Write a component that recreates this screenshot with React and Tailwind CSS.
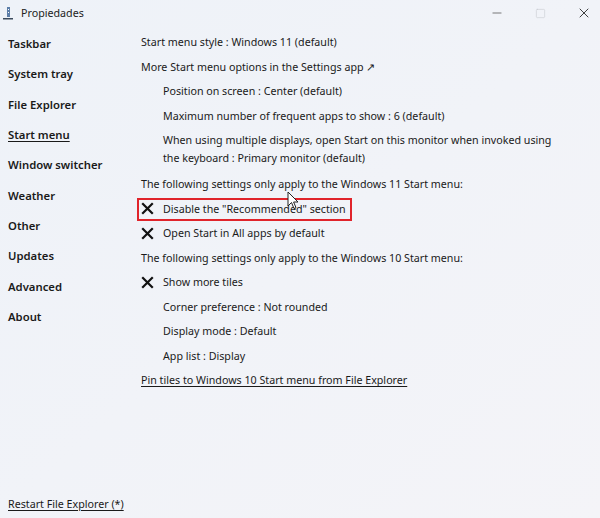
import { Minus, Square, X } from 'lucide-react';

const navItems = ['Taskbar', 'System tray', 'File Explorer', 'Start menu', 'Window switcher', 'Weather', 'Other', 'Updates', 'Advanced', 'About'];

const Cross = () => (
    <svg width="13" height="13" viewBox="0 0 13 13" className="shrink-0">
        <path d="M2 2 L11 11 M11 2 L2 11" stroke="#111" strokeWidth="2.2" strokeLinecap="square" />
    </svg>
);

const Row = ({ children, indent, check, boxed }) => (
    <div className={`relative flex h-[24.5px] items-center ${indent ? 'pl-[22px]' : ''}`}>
        {check && (
            <span className="flex w-[22px] items-center">
                <Cross />
            </span>
        )}
        <span>{children}</span>
        {boxed && <span className="absolute -left-[4px] top-[1px] h-[23px] w-[215px] border-2 border-[#e0242b]" />}
    </div>
);

const App = () => {
    return (
        <div className="relative flex h-[518px] w-[600px] flex-col overflow-hidden bg-gradient-to-br from-[#eef2f8] via-[#f1f3f8] to-[#f4f4f8] font-['Noto_Sans',sans-serif] text-[10.7px] text-[#1a1a1a]">
            {/* title bar */}
            <div className="flex h-[26px] items-center">
                <svg width="10" height="14" viewBox="0 0 10 14" className="ml-[3px]">
                    <rect x="4" y="1" width="3" height="10" fill="#5c7ea8" />
                    <rect x="5" y="3" width="1" height="1" fill="#fff" />
                    <rect x="5" y="6" width="1" height="1" fill="#fff" />
                    <rect x="0" y="12" width="10" height="1.5" fill="#3b4a5c" />
                </svg>
                <span className="ml-[8px] text-[10.7px] text-[#222]">Propiedades</span>
                <div className="ml-auto flex h-full items-center gap-[27.5px] pr-[8px]">
                    <span className="flex w-[16px] justify-center text-[#444]"><Minus size={14} strokeWidth={1.2} /></span>
                    <span className="flex w-[16px] justify-center text-[#c4c8ce]"><Square size={11} strokeWidth={1.2} /></span>
                    <span className="flex w-[16px] justify-center text-[#222]"><X size={16} strokeWidth={1.3} /></span>
                </div>
            </div>

            <div className="flex flex-1">
                {/* sidebar */}
                <nav className="flex w-[141px] flex-col pl-[8px] pt-[3px]">
                    {navItems.map((item) => (
                        <div key={item} className="flex h-[30.4px] items-center text-[11.3px] font-semibold text-[#1a1a1a]">
                            <span className={item === 'Start menu' ? 'underline underline-offset-2' : ''}>{item}</span>
                        </div>
                    ))}
                </nav>

                {/* settings list */}
                <main className="flex flex-col pt-[4px]">
                    <Row>Start menu style : Windows 11 (default)</Row>
                    <Row>More Start menu options in the Settings app ↗</Row>
                    <Row indent>Position on screen : Center (default)</Row>
                    <Row indent>Maximum number of frequent apps to show : 6 (default)</Row>
                    <div className="pl-[22px] pt-[3px] leading-[18px]">
                        <div>When using multiple displays, open Start on this monitor when invoked using</div>
                        <div>the keyboard : Primary monitor (default)</div>
                    </div>
                    <div className="h-[5px]" />
                    <Row>The following settings only apply to the Windows 11 Start menu:</Row>
                    <Row check boxed>Disable the "Recommended" section</Row>
                    <Row check>Open Start in All apps by default</Row>
                    <Row>The following settings only apply to the Windows 10 Start menu:</Row>
                    <Row check>Show more tiles</Row>
                    <Row indent>Corner preference : Not rounded</Row>
                    <Row indent>Display mode : Default</Row>
                    <Row indent>App list : Display</Row>
                    <Row><span className="underline underline-offset-2">Pin tiles to Windows 10 Start menu from File Explorer</span></Row>
                </main>
            </div>

            <div className="pb-[6px] pl-[8px]">
                <span className="underline underline-offset-2">Restart File Explorer (*)</span>
            </div>

            {/* mouse pointer */}
            <svg width="12" height="19" viewBox="0 0 12 19" className="absolute left-[287px] top-[191px]">
                <path d="M1 1 L1 15 L4.5 11.5 L7 17.5 L9 16.6 L6.6 11 L11 11 Z" fill="#fff" stroke="#222" strokeWidth="1" strokeLinejoin="round" />
            </svg>
        </div>
    );
};

export default App;
